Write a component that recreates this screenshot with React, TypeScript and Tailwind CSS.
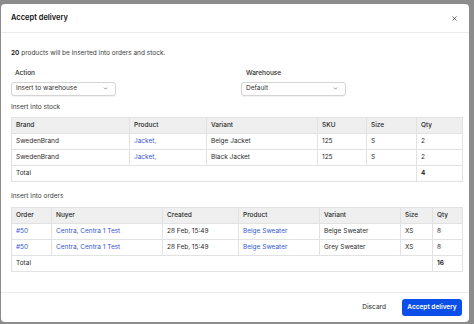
import { X, ChevronDown } from "lucide-react";

const stockRows = [
  { brand: "SwedenBrand", product: "Jacket,", variant: "Beige Jacket", sku: "125", size: "S", qty: "2" },
  { brand: "SwedenBrand", product: "Jacket,", variant: "Black Jacket", sku: "125", size: "S", qty: "2" },
];

const orderRows = [
  { order: "#50", buyer: "Centra, Centra 1 Test", created: "28 Feb, 15:49", product: "Beige Sweater", variant: "Beige Sweater", size: "XS", qty: "8" },
  { order: "#50", buyer: "Centra, Centra 1 Test", created: "28 Feb, 15:49", product: "Beige Sweater", variant: "Grey Sweater", size: "XS", qty: "8" },
];

function Select({ value }: { value: string }) {
  return (
    <div className="w-[105px] h-[14px] border border-[#d4d4d4] rounded-[3px] bg-white flex items-center justify-between pl-[4px] pr-[7px] shadow-[0_1px_1px_rgba(0,0,0,0.05)]">
      <span className="text-[6.5px] text-[#333]">{value}</span>
      <ChevronDown className="w-[5px] h-[5px] text-[#555]" strokeWidth={3} />
    </div>
  );
}

const th = "h-[16px] px-[4px] text-left font-medium text-[#1f1f1f] border border-[#e2e2e2] bg-[#efefef]";
const td = "h-[16px] px-[4px] text-[#2a2a2a] border border-[#e2e2e2]";
const link = "text-[#3656d6]";

export default function App() {
  return (
    <div className="h-screen w-screen bg-[#8c8c8c] pt-[4px] pl-[1px] overflow-hidden" style={{ fontFamily: "Inter, 'Noto Sans', sans-serif" }}>
      <div className="w-[468px] h-[318px] bg-white rounded-[4px] flex flex-col">
        {/* Header */}
        <div className="h-[29px] border-b border-[#ececec] flex items-center justify-between pl-[10px] pr-[11px]">
          <h1 className="text-[7.5px] font-semibold text-[#111]">Accept delivery</h1>
          <X className="w-[7px] h-[7px] text-[#333]" strokeWidth={2.5} />
        </div>

        {/* Body */}
        <div className="flex-1 pl-[10px] text-[6.5px]">
          <p className="mt-[16px] text-[#3a3a3a]">
            <span className="font-semibold text-[#111]">20</span> products will be inserted into orders and stock.
          </p>

          <div className="mt-[10px] flex">
            <div className="w-[230px]">
              <div className="pl-[4px] font-medium text-[#1f1f1f]">Action</div>
              <div className="mt-[3px]"><Select value="Insert to warehouse" /></div>
            </div>
            <div>
              <div className="pl-[5px] font-medium text-[#1f1f1f]">Warehouse</div>
              <div className="mt-[3px]"><Select value="Default" /></div>
            </div>
          </div>

          <div className="mt-[7px] text-[#3a3a3a]">Insert into stock</div>
          <table className="mt-[5px] w-[451px] table-fixed border-collapse">
            <colgroup>
              <col className="w-[118px]" />
              <col className="w-[77px]" />
              <col className="w-[111px]" />
              <col className="w-[49px]" />
              <col className="w-[50px]" />
              <col className="w-[46px]" />
            </colgroup>
            <thead>
              <tr>
                <th className={th}>Brand</th>
                <th className={th}>Product</th>
                <th className={th}>Variant</th>
                <th className={th}>SKU</th>
                <th className={th}>Size</th>
                <th className={th}>Qty</th>
              </tr>
            </thead>
            <tbody>
              {stockRows.map((r, i) => (
                <tr key={i}>
                  <td className={td}>{r.brand}</td>
                  <td className={`${td} ${link}`}>{r.product}</td>
                  <td className={td}>{r.variant}</td>
                  <td className={td}>{r.sku}</td>
                  <td className={td}>{r.size}</td>
                  <td className={td}>{r.qty}</td>
                </tr>
              ))}
              <tr>
                <td className={td} colSpan={5}>Total</td>
                <td className={`${td} font-semibold text-[#111]`}>4</td>
              </tr>
            </tbody>
          </table>

          <div className="mt-[10px] text-[#3a3a3a]">Insert into orders</div>
          <table className="mt-[5px] w-[451px] table-fixed border-collapse">
            <colgroup>
              <col className="w-[40px]" />
              <col className="w-[111px]" />
              <col className="w-[76px]" />
              <col className="w-[81px]" />
              <col className="w-[81px]" />
              <col className="w-[32px]" />
              <col className="w-[30px]" />
            </colgroup>
            <thead>
              <tr>
                <th className={th}>Order</th>
                <th className={th}>Nuyer</th>
                <th className={th}>Created</th>
                <th className={th}>Product</th>
                <th className={th}>Variant</th>
                <th className={th}>Size</th>
                <th className={th}>Qty</th>
              </tr>
            </thead>
            <tbody>
              {orderRows.map((r, i) => (
                <tr key={i}>
                  <td className={`${td} ${link}`}>{r.order}</td>
                  <td className={`${td} ${link}`}>{r.buyer}</td>
                  <td className={td}>{r.created}</td>
                  <td className={`${td} ${link}`}>{r.product}</td>
                  <td className={td}>{r.variant}</td>
                  <td className={td}>{r.size}</td>
                  <td className={td}>{r.qty}</td>
                </tr>
              ))}
              <tr>
                <td className={td} colSpan={6}>Total</td>
                <td className={`${td} font-semibold text-[#111]`}>16</td>
              </tr>
            </tbody>
          </table>
        </div>

        {/* Footer */}
        <div className="h-[30px] border-t border-[#ececec] flex items-center justify-end gap-[12px] pr-[7px]">
          <button className="text-[6.5px] font-medium text-[#444] px-[4px]">Discard</button>
          <button className="h-[17px] w-[60px] rounded-[3px] bg-[#0b4fe8] text-white text-[6.5px] font-semibold">Accept delivery</button>
        </div>
      </div>
    </div>
  );
}
